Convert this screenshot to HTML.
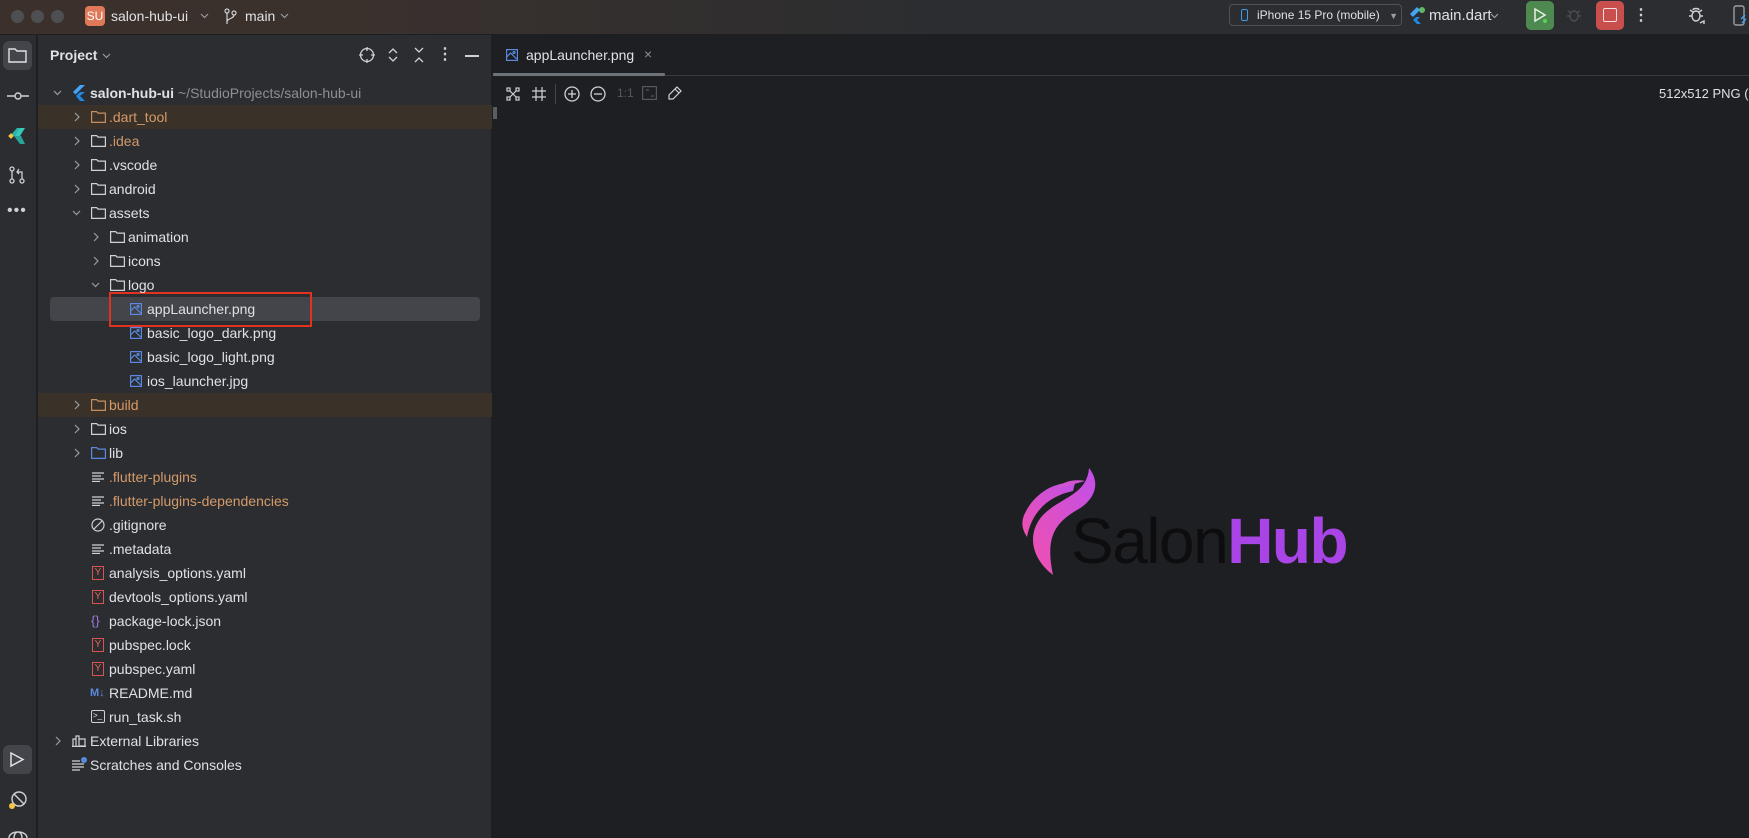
<!DOCTYPE html>
<html><head><meta charset="utf-8"><style>
*{margin:0;padding:0;box-sizing:border-box}
html,body{width:1749px;height:838px;overflow:hidden;background:#1e1f22}
body{font-family:"Liberation Sans",sans-serif;color:#dfe1e5;position:relative;font-size:14px}
.abs{position:absolute}
#title{left:0;top:0;width:1749px;height:35px;background:linear-gradient(90deg,#3b302b 0%,#3a312d 20%,#2b2d30 55%,#2b2d30 100%);border-bottom:1px solid #1e1f22}
.dot{width:13px;height:13px;border-radius:50%;background:#4e4f52;top:10px}
#strip{left:0;top:35px;width:37px;height:803px;background:#2b2d30;border-right:1px solid #1e1f22}
#panel{left:38px;top:35px;width:454px;height:803px;background:#2b2d30;border-right:1px solid #1e1f22}
.row{position:absolute;height:24px;line-height:24px;white-space:nowrap;left:0}
.ch{position:absolute;top:7px}
.txt{position:absolute;top:0}
.org{color:#d59a6a}
svg{position:absolute}
</style></head><body>
<div id="title" class="abs">
 <div class="abs dot" style="left:11px"></div><div class="abs dot" style="left:31px"></div><div class="abs dot" style="left:51px"></div>
 <div class="abs" style="left:85px;top:6px;width:20px;height:20px;border-radius:4px;background:#e0785a;color:#fff;font-size:12px;line-height:20px;text-align:center">SU</div>
 <div class="abs" style="left:111px;top:8px;font-size:14px;color:#dfe1e5">salon-hub-ui</div>
 <svg style="left:200px;top:13px" width="9" height="6" viewBox="0 0 9 6" fill="none" stroke="#9a9da3" stroke-width="1.2"><path d="M1 1l3.5 3.5L8 1"/></svg>
 <svg style="left:224px;top:8px" width="14" height="17" viewBox="0 0 14 17" fill="none" stroke="#cfd1d5" stroke-width="1.2"><circle cx="3" cy="3" r="2"/><circle cx="10" cy="5" r="2"/><path d="M3 5v11M10 7c0 4-7 3-7 7"/></svg>
 <div class="abs" style="left:245px;top:8px">main</div>
 <svg style="left:280px;top:13px" width="9" height="6" viewBox="0 0 9 6" fill="none" stroke="#9a9da3" stroke-width="1.2"><path d="M1 1l3.5 3.5L8 1"/></svg>
 <div class="abs" style="left:1229px;top:4px;width:173px;height:22px;border:1px solid #4e5157;border-radius:4px;font-size:12px;line-height:20px;padding-left:27px">iPhone 15 Pro (mobile) <span style="color:#9a9da3;font-size:9px;margin-left:6px">▼</span></div>
 <div class="abs" style="left:1241px;top:9px;width:7px;height:12px;border:1.5px solid #3d9be9;border-radius:2px"></div>
 <svg style="left:1408px;top:6px" width="18" height="20" viewBox="0 0 18 20"><path d="M9 1L2 8l3 3 7-7z" fill="#42a5f5"/><path d="M8 11l-3 3 4 4h4l-4-4 3-3z" fill="#1e88e5"/><circle cx="14" cy="4" r="3" fill="#5fb865"/></svg>
 <div class="abs" style="left:1429px;top:7px;font-size:15px">main.dart</div>
 <svg style="left:1490px;top:13px" width="9" height="6" viewBox="0 0 9 6" fill="none" stroke="#9a9da3" stroke-width="1.2"><path d="M1 1l3.5 3.5L8 1"/></svg>
 <div class="abs" style="left:1526px;top:1px;width:28px;height:29px;border-radius:5px;background:#4e8a4f"></div>
 <svg style="left:1531px;top:6px" width="18" height="18" viewBox="0 0 18 18" fill="none"><path d="M4 3l10 6-10 6z" stroke="#e6f0e6" stroke-width="1.5"/><circle cx="14" cy="15" r="2" fill="#57d45b"/></svg>
 <svg style="left:1566px;top:7px" width="16" height="16" viewBox="0 0 16 16" fill="none" stroke="#4a4c50" stroke-width="1.4"><ellipse cx="8" cy="9" rx="4" ry="5"/><path d="M1 9h3M12 9h3M2 4l3 2M14 4l-3 2"/></svg>
 <div class="abs" style="left:1596px;top:1px;width:28px;height:29px;border-radius:5px;background:#c94f4f"></div>
 <div class="abs" style="left:1603px;top:8px;width:14px;height:14px;border:1.6px solid #f4dede;border-radius:2px"></div>
 <div class="abs" style="left:1631px;top:5px;color:#cfd1d5;font-size:16px;font-weight:bold;width:20px;text-align:center">⋮</div>
 <svg style="left:1687px;top:6px" width="20" height="20" viewBox="0 0 20 20" fill="none" stroke="#cfd1d5" stroke-width="1.4"><ellipse cx="9" cy="10" rx="4" ry="5"/><path d="M2 10h3M13 10h3M3 4l3 2M15 4l-3 2M6 4c0-2 6-2 6 0M13 17l4-2v3"/></svg>
 <svg style="left:1732px;top:5px" width="17" height="22" viewBox="0 0 17 22" fill="none" stroke="#9a9da3" stroke-width="1.4"><rect x="2" y="1" width="10" height="19" rx="2"/><path d="M9 14l4-4M10 18l4-4" stroke="#42a5f5"/></svg>
</div>

<div id="strip" class="abs">
 <div class="abs" style="left:3px;top:6px;width:29px;height:29px;border-radius:6px;background:#43454a"></div>
 <svg style="left:8px;top:12px" width="19" height="16" viewBox="0 0 19 16" fill="none" stroke="#dfe1e5" stroke-width="1.4"><path d="M1 2h6l2 2h9v11H1z"/></svg>
 <svg style="left:7px;top:57px" width="22" height="8" viewBox="0 0 22 8" fill="none" stroke="#cfd1d5" stroke-width="1.4"><circle cx="11" cy="4" r="3"/><path d="M0 4h8M14 4h8"/></svg>
 <svg style="left:8px;top:92px" width="20" height="18" viewBox="0 0 20 18"><path d="M9 1L2 9h5l7-8z" fill="#2bb5a8"/><path d="M9 9l-3 0 6 8h5l-4-8z" fill="#26a69a"/><path d="M17 1h-5l-5 8h5z" fill="#35c9bb"/><rect x="1" y="7" width="4" height="4" transform="rotate(45 3 9)" fill="#f4c542"/></svg>
 <svg style="left:9px;top:131px" width="17" height="18" viewBox="0 0 17 18" fill="none" stroke="#cfd1d5" stroke-width="1.3"><circle cx="3" cy="3" r="2"/><circle cx="3" cy="15" r="2"/><circle cx="13" cy="15" r="2"/><path d="M3 5v8M13 13V6H8M10 3L8 6l2 2"/></svg>
 <div class="abs" style="left:7px;top:167px;color:#cfd1d5;font-size:16px;letter-spacing:1px">•••</div>
 <div class="abs" style="left:3px;top:710px;width:29px;height:29px;border-radius:6px;background:#43454a"></div>
 <svg style="left:9px;top:716px" width="16" height="17" viewBox="0 0 16 17" fill="none" stroke="#dfe1e5" stroke-width="1.5"><path d="M2 2l12 6.5L2 15z"/></svg>
 <svg style="left:7px;top:756px" width="22" height="20" viewBox="0 0 22 20" fill="none" stroke="#cfd1d5" stroke-width="1.4"><circle cx="12" cy="8" r="7"/><path d="M7 3l10 10"/><circle cx="5" cy="15" r="3" fill="#f4c542" stroke="none"/></svg>
 <svg style="left:8px;top:794px" width="20" height="9" viewBox="0 0 20 9" fill="none" stroke="#cfd1d5" stroke-width="1.4"><path d="M1 9c0-8 18-8 18 0M6 9c0-8 8-8 8 0"/></svg>
</div>

<div id="panel" class="abs">
 <div class="abs" style="left:12px;top:12px;font-weight:bold;font-size:14px">Project</div>
 <svg style="left:64px;top:18px" width="9" height="6" viewBox="0 0 9 6" fill="none" stroke="#9a9da3" stroke-width="1.2"><path d="M1 1l3.5 3.5L8 1"/></svg>
 <svg style="left:321px;top:12px" width="16" height="16" viewBox="0 0 16 16" fill="none" stroke="#cfd1d5" stroke-width="1.3"><circle cx="8" cy="8" r="6.5"/><path d="M8 0v4M8 12v4M0 8h4M12 8h4"/></svg>
 <svg style="left:350px;top:12px" width="10" height="16" viewBox="0 0 10 16" fill="none" stroke="#cfd1d5" stroke-width="1.3"><path d="M1 6l4-4 4 4M1 10l4 4 4-4"/></svg>
 <svg style="left:376px;top:12px" width="10" height="16" viewBox="0 0 10 16" fill="none" stroke="#cfd1d5" stroke-width="1.3"><path d="M1 1l4 4 4-4M1 15l4-4 4 4"/></svg>
 <div class="abs" style="left:399px;top:9px;color:#cfd1d5;font-size:16px;font-weight:bold">⋮</div>
 <div class="abs" style="left:427px;top:20px;width:14px;height:1.5px;background:#cfd1d5"></div>
 <div class="abs" style="left:455px;top:72px;width:4px;height:12px;background:#5a5d62"></div>
</div>

<div class="abs" style="left:38px;top:105px;width:454px;height:24px;background:#3a3128"></div>
<div class="abs" style="left:38px;top:393px;width:454px;height:24px;background:#3a3128"></div>
<div class="abs" style="left:50px;top:297px;width:430px;height:24px;background:#43454a;border-radius:4px"></div>
<div class="abs" style="left:109px;top:292px;width:203px;height:35px;border:2px solid #e0321f"></div>

<div id="tree" class="abs" style="left:0;top:81px;width:492px">
<div class="row" style="top:0"><svg class="ch" style="left:53px;top:9px" width="9" height="6" viewBox="0 0 9 6" fill="none" stroke="#9a9da3" stroke-width="1.2"><path d="M1 1l3.5 3.5L8 1"/></svg>
 <svg style="left:72px;top:4px" width="14" height="16" viewBox="0 0 14 16"><path d="M8 0L1 7l2.5 2.5L13 0z" fill="#42a5f5"/><path d="M8 7L4 11l4 5h5l-5-5 5-4z" fill="#1e88e5"/></svg>
 <span class="txt" style="left:90px;font-weight:bold">salon-hub-ui</span><span class="txt" style="left:178px;color:#8c8f95">~/StudioProjects/salon-hub-ui</span></div>

<div class="row" style="top:24px"><svg class="ch" style="left:74px" width="6" height="10" viewBox="0 0 6 10" fill="none" stroke="#9a9da3" stroke-width="1.2"><path d="M1 1l4 4-4 4"/></svg><svg style="left:91px;top:6px" width="15" height="12" viewBox="0 0 15 12" fill="none" stroke="#c98e5f" stroke-width="1.2"><path d="M.6.6h5l1.5 1.5h7.3v9.3H.6z"/></svg><span class="txt org" style="left:109px">.dart_tool</span></div>
<div class="row" style="top:48px"><svg class="ch" style="left:74px" width="6" height="10" viewBox="0 0 6 10" fill="none" stroke="#9a9da3" stroke-width="1.2"><path d="M1 1l4 4-4 4"/></svg><svg style="left:91px;top:6px" width="15" height="12" viewBox="0 0 15 12" fill="none" stroke="#cfd1d5" stroke-width="1.2"><path d="M.6.6h5l1.5 1.5h7.3v9.3H.6z"/></svg><span class="txt org" style="left:109px">.idea</span></div>
<div class="row" style="top:72px"><svg class="ch" style="left:74px" width="6" height="10" viewBox="0 0 6 10" fill="none" stroke="#9a9da3" stroke-width="1.2"><path d="M1 1l4 4-4 4"/></svg><svg style="left:91px;top:6px" width="15" height="12" viewBox="0 0 15 12" fill="none" stroke="#cfd1d5" stroke-width="1.2"><path d="M.6.6h5l1.5 1.5h7.3v9.3H.6z"/></svg><span class="txt" style="left:109px">.vscode</span></div>
<div class="row" style="top:96px"><svg class="ch" style="left:74px" width="6" height="10" viewBox="0 0 6 10" fill="none" stroke="#9a9da3" stroke-width="1.2"><path d="M1 1l4 4-4 4"/></svg><svg style="left:91px;top:6px" width="15" height="12" viewBox="0 0 15 12" fill="none" stroke="#cfd1d5" stroke-width="1.2"><path d="M.6.6h5l1.5 1.5h7.3v9.3H.6z"/></svg><span class="txt" style="left:109px">android</span></div>
<div class="row" style="top:120px"><svg class="ch" style="left:72px;top:9px" width="9" height="6" viewBox="0 0 9 6" fill="none" stroke="#9a9da3" stroke-width="1.2"><path d="M1 1l3.5 3.5L8 1"/></svg><svg style="left:91px;top:6px" width="15" height="12" viewBox="0 0 15 12" fill="none" stroke="#cfd1d5" stroke-width="1.2"><path d="M.6.6h5l1.5 1.5h7.3v9.3H.6z"/></svg><span class="txt" style="left:109px">assets</span></div>
<div class="row" style="top:144px"><svg class="ch" style="left:93px" width="6" height="10" viewBox="0 0 6 10" fill="none" stroke="#9a9da3" stroke-width="1.2"><path d="M1 1l4 4-4 4"/></svg><svg style="left:110px;top:6px" width="15" height="12" viewBox="0 0 15 12" fill="none" stroke="#cfd1d5" stroke-width="1.2"><path d="M.6.6h5l1.5 1.5h7.3v9.3H.6z"/></svg><span class="txt" style="left:128px">animation</span></div>
<div class="row" style="top:168px"><svg class="ch" style="left:93px" width="6" height="10" viewBox="0 0 6 10" fill="none" stroke="#9a9da3" stroke-width="1.2"><path d="M1 1l4 4-4 4"/></svg><svg style="left:110px;top:6px" width="15" height="12" viewBox="0 0 15 12" fill="none" stroke="#cfd1d5" stroke-width="1.2"><path d="M.6.6h5l1.5 1.5h7.3v9.3H.6z"/></svg><span class="txt" style="left:128px">icons</span></div>
<div class="row" style="top:192px"><svg class="ch" style="left:91px;top:9px" width="9" height="6" viewBox="0 0 9 6" fill="none" stroke="#9a9da3" stroke-width="1.2"><path d="M1 1l3.5 3.5L8 1"/></svg><svg style="left:110px;top:6px" width="15" height="12" viewBox="0 0 15 12" fill="none" stroke="#cfd1d5" stroke-width="1.2"><path d="M.6.6h5l1.5 1.5h7.3v9.3H.6z"/></svg><span class="txt" style="left:128px">logo</span></div>
<div class="row" style="top:216px"><svg style="left:130px;top:6px" width="12" height="12" viewBox="0 0 12 12" fill="none" stroke="#5a8ae0" stroke-width="1.2"><rect x=".6" y=".6" width="10.8" height="10.8"/><path d="M.6 8l4-4 6 6"/><circle cx="8" cy="3.5" r="1"/></svg><span class="txt" style="left:147px">appLauncher.png</span></div>
<div class="row" style="top:240px"><svg style="left:130px;top:6px" width="12" height="12" viewBox="0 0 12 12" fill="none" stroke="#5a8ae0" stroke-width="1.2"><rect x=".6" y=".6" width="10.8" height="10.8"/><path d="M.6 8l4-4 6 6"/><circle cx="8" cy="3.5" r="1"/></svg><span class="txt" style="left:147px">basic_logo_dark.png</span></div>
<div class="row" style="top:264px"><svg style="left:130px;top:6px" width="12" height="12" viewBox="0 0 12 12" fill="none" stroke="#5a8ae0" stroke-width="1.2"><rect x=".6" y=".6" width="10.8" height="10.8"/><path d="M.6 8l4-4 6 6"/><circle cx="8" cy="3.5" r="1"/></svg><span class="txt" style="left:147px">basic_logo_light.png</span></div>
<div class="row" style="top:288px"><svg style="left:130px;top:6px" width="12" height="12" viewBox="0 0 12 12" fill="none" stroke="#5a8ae0" stroke-width="1.2"><rect x=".6" y=".6" width="10.8" height="10.8"/><path d="M.6 8l4-4 6 6"/><circle cx="8" cy="3.5" r="1"/></svg><span class="txt" style="left:147px">ios_launcher.jpg</span></div>
<div class="row" style="top:312px"><svg class="ch" style="left:74px" width="6" height="10" viewBox="0 0 6 10" fill="none" stroke="#9a9da3" stroke-width="1.2"><path d="M1 1l4 4-4 4"/></svg><svg style="left:91px;top:6px" width="15" height="12" viewBox="0 0 15 12" fill="none" stroke="#c98e5f" stroke-width="1.2"><path d="M.6.6h5l1.5 1.5h7.3v9.3H.6z"/></svg><span class="txt org" style="left:109px">build</span></div>
<div class="row" style="top:336px"><svg class="ch" style="left:74px" width="6" height="10" viewBox="0 0 6 10" fill="none" stroke="#9a9da3" stroke-width="1.2"><path d="M1 1l4 4-4 4"/></svg><svg style="left:91px;top:6px" width="15" height="12" viewBox="0 0 15 12" fill="none" stroke="#cfd1d5" stroke-width="1.2"><path d="M.6.6h5l1.5 1.5h7.3v9.3H.6z"/></svg><span class="txt" style="left:109px">ios</span></div>
<div class="row" style="top:360px"><svg class="ch" style="left:74px" width="6" height="10" viewBox="0 0 6 10" fill="none" stroke="#9a9da3" stroke-width="1.2"><path d="M1 1l4 4-4 4"/></svg><svg style="left:91px;top:6px" width="15" height="12" viewBox="0 0 15 12" fill="none" stroke="#5a8ae0" stroke-width="1.2"><path d="M.6.6h5l1.5 1.5h7.3v9.3H.6z"/></svg><span class="txt" style="left:109px">lib</span></div>
<div class="row" style="top:384px"><svg style="left:92px;top:7px" width="12" height="10" viewBox="0 0 12 10" stroke="#cfd1d5" stroke-width="1.2"><path d="M0 1h12M0 4h9M0 7h12M0 9.5h8"/></svg><span class="txt org" style="left:109px">.flutter-plugins</span></div>
<div class="row" style="top:408px"><svg style="left:92px;top:7px" width="12" height="10" viewBox="0 0 12 10" stroke="#cfd1d5" stroke-width="1.2"><path d="M0 1h12M0 4h9M0 7h12M0 9.5h8"/></svg><span class="txt org" style="left:109px">.flutter-plugins-dependencies</span></div>
<div class="row" style="top:432px"><svg style="left:91px;top:5px" width="14" height="14" viewBox="0 0 14 14" fill="none" stroke="#cfd1d5" stroke-width="1.2"><circle cx="7" cy="7" r="6"/><path d="M3 11l8-8"/></svg><span class="txt" style="left:109px">.gitignore</span></div>
<div class="row" style="top:456px"><svg style="left:92px;top:7px" width="12" height="10" viewBox="0 0 12 10" stroke="#cfd1d5" stroke-width="1.2"><path d="M0 1h12M0 4h9M0 7h12M0 9.5h8"/></svg><span class="txt" style="left:109px">.metadata</span></div>
<div class="row" style="top:480px"><div class="abs" style="left:92px;top:5px;width:12px;height:14px;border:1.2px solid #d9534f;color:#e06660;font-size:10px;line-height:12px;text-align:center">Y</div><span class="txt" style="left:109px">analysis_options.yaml</span></div>
<div class="row" style="top:504px"><div class="abs" style="left:92px;top:5px;width:12px;height:14px;border:1.2px solid #d9534f;color:#e06660;font-size:10px;line-height:12px;text-align:center">Y</div><span class="txt" style="left:109px">devtools_options.yaml</span></div>
<div class="row" style="top:528px"><span class="txt" style="left:91px;color:#a07ae0;font-size:13px">{}</span><span class="txt" style="left:109px">package-lock.json</span></div>
<div class="row" style="top:552px"><div class="abs" style="left:92px;top:5px;width:12px;height:14px;border:1.2px solid #d9534f;color:#e06660;font-size:10px;line-height:12px;text-align:center">Y</div><span class="txt" style="left:109px">pubspec.lock</span></div>
<div class="row" style="top:576px"><div class="abs" style="left:92px;top:5px;width:12px;height:14px;border:1.2px solid #d9534f;color:#e06660;font-size:10px;line-height:12px;text-align:center">Y</div><span class="txt" style="left:109px">pubspec.yaml</span></div>
<div class="row" style="top:600px"><span class="txt" style="left:90px;color:#5a8ae0;font-size:11px;font-weight:bold">M↓</span><span class="txt" style="left:109px">README.md</span></div>
<div class="row" style="top:624px"><div class="abs" style="left:91px;top:5px;width:14px;height:13px;border:1.2px solid #cfd1d5;border-radius:2px;font-size:8px;line-height:10px;padding-left:1px">&gt;_</div><span class="txt" style="left:109px">run_task.sh</span></div>
<div class="row" style="top:648px"><svg class="ch" style="left:55px" width="6" height="10" viewBox="0 0 6 10" fill="none" stroke="#9a9da3" stroke-width="1.2"><path d="M1 1l4 4-4 4"/></svg><svg style="left:72px;top:6px" width="14" height="12" viewBox="0 0 14 12" fill="none" stroke="#cfd1d5" stroke-width="1.2"><path d="M1 11V4h3v7M4 11V1h3v10M7 11V4h6v7zM0 11.4h14"/></svg><span class="txt" style="left:90px">External Libraries</span></div>
<div class="row" style="top:672px"><svg style="left:72px;top:4px" width="16" height="14" viewBox="0 0 16 14" stroke="#cfd1d5" stroke-width="1.2"><path d="M0 4h8M0 7h12M0 10h12M0 13h8"/><circle cx="12" cy="3" r="3" fill="#5a8ae0" stroke="none"/></svg><span class="txt" style="left:90px">Scratches and Consoles</span></div>
</div>

<!-- editor -->
<div class="abs" style="left:493px;top:75px;width:1256px;height:1px;background:#393b40"></div>
<svg style="left:506px;top:49px" width="12" height="12" viewBox="0 0 12 12" fill="none" stroke="#5a8ae0" stroke-width="1.2"><rect x=".6" y=".6" width="10.8" height="10.8"/><path d="M.6 8l4-4 6 6"/><circle cx="8" cy="3.5" r="1"/></svg>
<div class="abs" style="left:526px;top:47px;font-size:14px">appLauncher.png</div>
<div class="abs" style="left:644px;top:46px;color:#8c8f95;font-size:14px">×</div>
<div class="abs" style="left:493px;top:73px;width:172px;height:3px;background:#6f737a;border-radius:1px"></div>

<svg style="left:506px;top:87px" width="14" height="14" viewBox="0 0 14 14" fill="none" stroke="#cfd1d5" stroke-width="1.2"><rect x="1" y="1" width="3" height="3"/><rect x="10" y="1" width="3" height="3"/><rect x="1" y="10" width="3" height="3"/><rect x="10" y="10" width="3" height="3"/><path d="M4 4l6 6M10 4l-6 6"/></svg>
<svg style="left:532px;top:87px" width="14" height="14" viewBox="0 0 14 14" fill="none" stroke="#cfd1d5" stroke-width="1.2"><path d="M4 0v14M10 0v14M0 4h14M0 10h14"/></svg>
<div class="abs" style="left:555px;top:84px;width:1px;height:20px;background:#43454a"></div>
<svg style="left:564px;top:86px" width="16" height="16" viewBox="0 0 16 16" fill="none" stroke="#cfd1d5" stroke-width="1.3"><circle cx="8" cy="8" r="7"/><path d="M4 8h8M8 4v8"/></svg>
<svg style="left:590px;top:86px" width="16" height="16" viewBox="0 0 16 16" fill="none" stroke="#cfd1d5" stroke-width="1.3"><circle cx="8" cy="8" r="7"/><path d="M4 8h8"/></svg>
<div class="abs" style="left:617px;top:86px;color:#55585e;font-size:12px">1:1</div>
<svg style="left:642px;top:86px" width="15" height="14" viewBox="0 0 15 14" fill="none" stroke="#55585e" stroke-width="1.2"><rect x=".6" y=".6" width="13.8" height="12.8"/><path d="M4 4h3M9 10h3"/></svg>
<svg style="left:667px;top:86px" width="15" height="15" viewBox="0 0 15 15" fill="none" stroke="#cfd1d5" stroke-width="1.2"><path d="M10 1l4 4-8 8H2v-4z M8 3l4 4"/></svg>
<div class="abs" style="left:1659px;top:86px;font-size:13px">512x512 PNG (</div>

<!-- logo -->
<svg style="left:1015px;top:465px" width="90" height="115" viewBox="0 0 90 115">
 <defs><linearGradient id="g" x1="0" y1="1" x2="1" y2="0"><stop offset="0" stop-color="#f050b0"/><stop offset="1" stop-color="#c050e8"/></linearGradient></defs>
 <path d="M74 3C86 18 80 35 62 45 40 58 30 72 38 110 18 95 10 70 28 50 46 32 72 30 74 3z" fill="url(#g)"/>
 <path d="M60 18C40 16 20 28 10 48 5 58 8 66 12 72 16 50 30 32 58 26z" fill="url(#g)"/>
 <path d="M40 24C48 16 60 14 70 16 56 20 48 22 40 24z" fill="#d055d0"/>
</svg>
<div class="abs" style="left:1071px;top:505px;font-size:64px;line-height:72px;letter-spacing:-1.5px;white-space:nowrap"><span style="color:#0d0d0f">Salon</span><span style="color:#a944e6;font-weight:bold">Hub</span></div>
</body></html>
